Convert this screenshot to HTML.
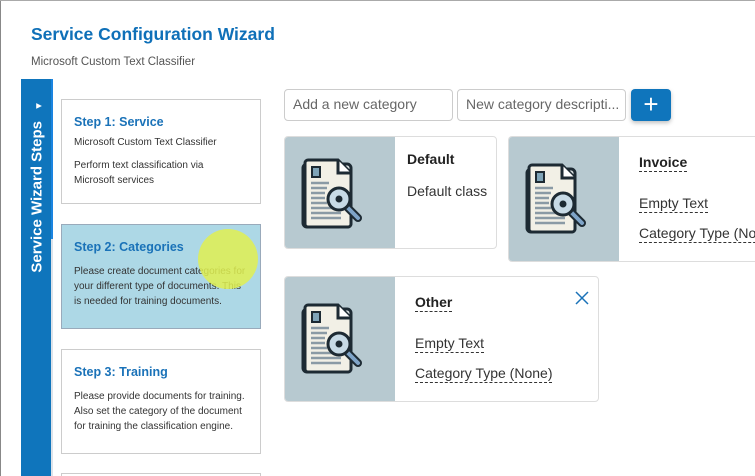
<!DOCTYPE html>
<html><head><meta charset="utf-8"><style>
*{box-sizing:border-box;margin:0;padding:0}
html,body{width:755px;height:476px;overflow:hidden}
body{background:#fff;font-family:"Segoe UI","Liberation Sans",sans-serif;position:relative}
.abs{position:absolute}
.bl{left:0;top:0;width:1px;height:476px;background:#888}
.bt{left:0;top:0;width:755px;height:1px;background:#aaa}
h1{position:absolute;left:31px;top:24px;font-size:17.5px;color:#0f70b8;font-weight:bold}
.sub{left:31px;top:56px;font-size:11.5px;color:#555}
.bar{left:21px;top:79px;width:31px;height:397px;background:#0f75bc}
.strip{left:51px;top:79px;width:2px;height:397px;background:#dde3ea}
.strip2{left:51px;top:79px;width:2px;height:160px;background:#1a84e0}
.vt{left:37px;top:188px;transform:translate(-50%,-50%) rotate(-90deg);color:#fff;font-weight:bold;font-size:15px;white-space:nowrap}
.step{left:61px;width:200px;height:105px;border:1px solid #ccc;background:#fff;padding:15px 14px 0 12px}
.step b{display:block;color:#1a72b8;font-size:12.5px;margin-bottom:6px}
.step p{font-size:10px;color:#333;line-height:15px}
.in{top:89px;height:32px;border:1px solid #ccc;border-radius:4px;font-size:14px;color:#666;padding:6px 0 0 8px;white-space:nowrap;overflow:hidden}
.plus{left:631px;top:89px;width:40px;height:32px;background:#0f75bc;border-radius:4px;box-shadow:0 2px 4px rgba(0,0,0,.25);color:#fff;font-size:26px;text-align:center;line-height:30px;font-weight:300}
.card{border:1px solid #ddd;border-radius:4px;background:#fff;overflow:hidden}
.img{position:absolute;left:0;top:0;bottom:0;width:110px;background:#b7c9d0}
.img svg{position:absolute;left:15px;top:21px}
.t{font-size:14px;color:#222;font-weight:bold;position:absolute}
.d{font-size:14px;color:#333;position:absolute;white-space:nowrap}
.u{border-bottom:1px dashed #333;padding-bottom:1px}
</style></head><body>
<div class="abs bl"></div><div class="abs bt"></div>
<h1>Service Configuration Wizard</h1>
<div class="abs sub">Microsoft Custom Text Classifier</div>
<div class="abs bar"></div><div class="abs strip"></div><div class="abs strip2"></div>
<div class="abs vt">Service Wizard Steps &nbsp;&nbsp;<span style="font-size:10px">▾</span></div>
<div class="abs step" style="top:99px"><b>Step 1: Service</b><p>Microsoft Custom Text Classifier</p><p style="margin-top:8px">Perform text classification via Microsoft services</p></div>
<div class="abs step" style="top:224px;background:#add8e6;border-color:#9ab"><b>Step 2: Categories</b><p style="margin-top:10px">Please create document categories for your different type of documents. This is needed for training documents.</p></div>
<div class="abs" style="left:198px;top:229px;width:60px;height:60px;border-radius:50%;background:rgba(225,240,80,.85)"></div>
<div class="abs step" style="top:349px"><b>Step 3: Training</b><p style="margin-top:10px">Please provide documents for training. Also set the category of the document for training the classification engine.</p></div>
<div class="abs" style="left:61px;top:473px;width:200px;height:3px;border:1px solid #ccc;border-bottom:none"></div>
<div class="abs in" style="left:284px;width:169px">Add a new category</div>
<div class="abs in" style="left:457px;width:169px">New category descripti...</div>
<div class="abs plus">+</div>

<svg width="0" height="0" style="position:absolute"><defs><g id="doc">
<rect x="3" y="6" width="48" height="63" rx="4" fill="#d9dfe0" stroke="#1d2a33" stroke-width="3"/>
<path d="M8 2h30l13 13v51a3 3 0 0 1-3 3H8a3 3 0 0 1-3-3V5a3 3 0 0 1 3-3z" fill="#f2f0e6" stroke="#1d2a33" stroke-width="3"/>
<path d="M38 2v13h13" fill="#fff" stroke="#1d2a33" stroke-width="3"/>
<rect x="12" y="9" width="8" height="10" fill="#7fa4b8" stroke="#1d2a33" stroke-width="2"/>
<g stroke="#8a9aa5" stroke-width="2.5"><path d="M11 25h18M11 30h16M11 35h14M11 40h14M11 45h16M11 50h30M11 55h30M11 60h30"/></g>
<path d="M48 50l10 10" stroke="#1d2a33" stroke-width="8" stroke-linecap="round"/>
<path d="M48 50l10 10" stroke="#7fa4c8" stroke-width="4" stroke-linecap="round"/>
<circle cx="39" cy="41" r="11" fill="#c7dae6" stroke="#1d2a33" stroke-width="3"/>
<circle cx="39" cy="41" r="3.5" fill="#1d2a33"/>
</g></defs></svg>

<div class="abs card" style="left:284px;top:136px;width:213px;height:113px">
<div class="img"><svg width="64" height="72"><use href="#doc"/></svg></div>
<div class="t" style="left:122px;top:14px">Default</div>
<div class="d" style="left:122px;top:46px">Default class</div>
</div>
<div class="abs card" style="left:508px;top:136px;width:247px;height:126px;border-right:none;border-radius:4px 0 0 4px">
<div class="img"><svg width="64" height="72" style="top:26px"><use href="#doc"/></svg></div>
<div class="t u" style="left:130px;top:17px">Invoice</div>
<div class="d u" style="left:130px;top:58px">Empty Text</div>
<div class="d u" style="left:130px;top:88px">Category Type (None)</div>
</div>
<div class="abs card" style="left:284px;top:276px;width:315px;height:126px">
<div class="img"><svg width="64" height="72" style="top:26px"><use href="#doc"/></svg></div>
<div class="t u" style="left:130px;top:17px">Other</div>
<div class="d u" style="left:130px;top:58px">Empty Text</div>
<div class="d u" style="left:130px;top:88px">Category Type (None)</div>
<svg class="abs" style="left:290px;top:14px" width="14" height="14"><path d="M1 1l12 12M13 1L1 13" stroke="#1a72b8" stroke-width="1.5"/></svg>
</div>
</body></html>
